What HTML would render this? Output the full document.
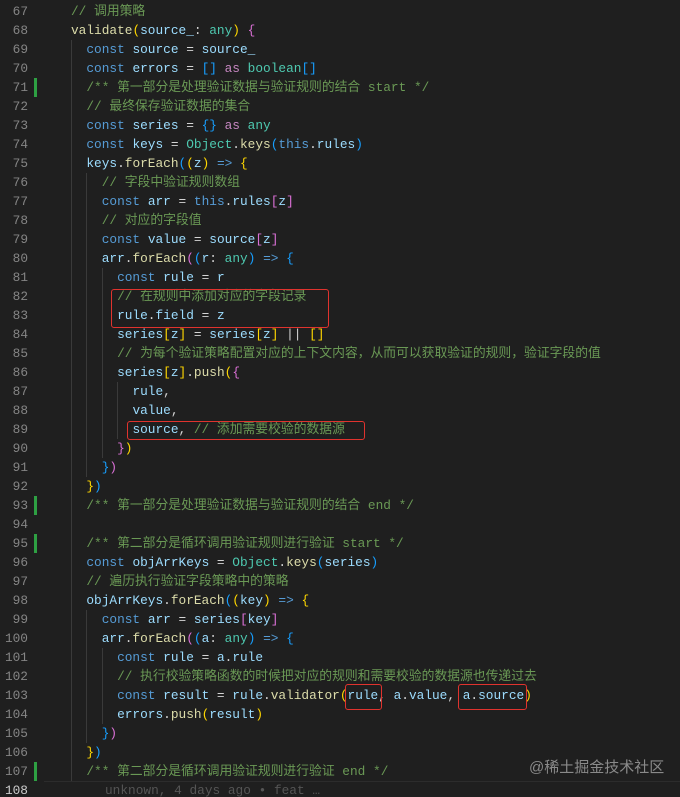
<!DOCTYPE html>
<html><head><meta charset="utf-8"><style>
html,body{margin:0;padding:0;background:#1f1f1f;width:680px;height:797px;overflow:hidden}
body{position:relative;font-family:"Liberation Mono","Noto Sans CJK SC",monospace;font-size:12.8px;color:#d4d4d4}
.l{position:absolute;left:0;height:19px;line-height:19px;white-space:pre;width:680px}
.n{position:absolute;left:0;width:28px;text-align:right;color:#858585}
.c{position:absolute;left:71px}
.g{display:inline-block;width:15.36px;height:19px;vertical-align:top;box-shadow:inset 1px 0 0 #3a3a3a}
.cm{color:#6a9955}.k{color:#569cd6}.v{color:#9cdcfe}.f{color:#dcdcaa}.t{color:#4ec9b0}.p{color:#c586c0}
.b1{color:#ffd700}.b2{color:#da70d6}.b3{color:#179fff}.o{color:#d4d4d4}
.gb{position:absolute;left:34px;width:3px;height:19px;background:#2ea043}
.rb{position:absolute;border:1px solid #e0332e;border-radius:3px}
</style></head><body>
<div class="l" style="top:2px"><span class="n">67</span><span class="c"><span class="cm">// 调用策略</span></span></div>
<div class="l" style="top:21px"><span class="n">68</span><span class="c"><span class="f">validate</span><span class="b1">(</span><span class="v">source_</span>: <span class="t">any</span><span class="b1">)</span> <span class="b2">{</span></span></div>
<div class="l" style="top:40px"><span class="n">69</span><span class="c"><span class="g">  </span><span class="k">const</span> <span class="v">source</span> = <span class="v">source_</span></span></div>
<div class="l" style="top:59px"><span class="n">70</span><span class="c"><span class="g">  </span><span class="k">const</span> <span class="v">errors</span> = <span class="b3">[]</span> <span class="p">as</span> <span class="t">boolean</span><span class="b3">[]</span></span></div>
<div class="gb" style="top:78px"></div>
<div class="l" style="top:78px"><span class="n">71</span><span class="c"><span class="g">  </span><span class="cm">/** 第一部分是处理验证数据与验证规则的结合 start */</span></span></div>
<div class="l" style="top:97px"><span class="n">72</span><span class="c"><span class="g">  </span><span class="cm">// 最终保存验证数据的集合</span></span></div>
<div class="l" style="top:116px"><span class="n">73</span><span class="c"><span class="g">  </span><span class="k">const</span> <span class="v">series</span> = <span class="b3">{}</span> <span class="p">as</span> <span class="t">any</span></span></div>
<div class="l" style="top:135px"><span class="n">74</span><span class="c"><span class="g">  </span><span class="k">const</span> <span class="v">keys</span> = <span class="t">Object</span>.<span class="f">keys</span><span class="b3">(</span><span class="k">this</span>.<span class="v">rules</span><span class="b3">)</span></span></div>
<div class="l" style="top:154px"><span class="n">75</span><span class="c"><span class="g">  </span><span class="v">keys</span>.<span class="f">forEach</span><span class="b3">(</span><span class="b1">(</span><span class="v">z</span><span class="b1">)</span> <span class="k">=&gt;</span> <span class="b1">{</span></span></div>
<div class="l" style="top:173px"><span class="n">76</span><span class="c"><span class="g">  </span><span class="g">  </span><span class="cm">// 字段中验证规则数组</span></span></div>
<div class="l" style="top:192px"><span class="n">77</span><span class="c"><span class="g">  </span><span class="g">  </span><span class="k">const</span> <span class="v">arr</span> = <span class="k">this</span>.<span class="v">rules</span><span class="b2">[</span><span class="v">z</span><span class="b2">]</span></span></div>
<div class="l" style="top:211px"><span class="n">78</span><span class="c"><span class="g">  </span><span class="g">  </span><span class="cm">// 对应的字段值</span></span></div>
<div class="l" style="top:230px"><span class="n">79</span><span class="c"><span class="g">  </span><span class="g">  </span><span class="k">const</span> <span class="v">value</span> = <span class="v">source</span><span class="b2">[</span><span class="v">z</span><span class="b2">]</span></span></div>
<div class="l" style="top:249px"><span class="n">80</span><span class="c"><span class="g">  </span><span class="g">  </span><span class="v">arr</span>.<span class="f">forEach</span><span class="b2">(</span><span class="b3">(</span><span class="v">r</span>: <span class="t">any</span><span class="b3">)</span> <span class="k">=&gt;</span> <span class="b3">{</span></span></div>
<div class="l" style="top:268px"><span class="n">81</span><span class="c"><span class="g">  </span><span class="g">  </span><span class="g">  </span><span class="k">const</span> <span class="v">rule</span> = <span class="v">r</span></span></div>
<div class="l" style="top:287px"><span class="n">82</span><span class="c"><span class="g">  </span><span class="g">  </span><span class="g">  </span><span class="cm">// 在规则中添加对应的字段记录</span></span></div>
<div class="l" style="top:306px"><span class="n">83</span><span class="c"><span class="g">  </span><span class="g">  </span><span class="g">  </span><span class="v">rule</span>.<span class="v">field</span> = <span class="v">z</span></span></div>
<div class="l" style="top:325px"><span class="n">84</span><span class="c"><span class="g">  </span><span class="g">  </span><span class="g">  </span><span class="v">series</span><span class="b1">[</span><span class="v">z</span><span class="b1">]</span> = <span class="v">series</span><span class="b1">[</span><span class="v">z</span><span class="b1">]</span> || <span class="b1">[]</span></span></div>
<div class="l" style="top:344px"><span class="n">85</span><span class="c"><span class="g">  </span><span class="g">  </span><span class="g">  </span><span class="cm">// 为每个验证策略配置对应的上下文内容，从而可以获取验证的规则，验证字段的值</span></span></div>
<div class="l" style="top:363px"><span class="n">86</span><span class="c"><span class="g">  </span><span class="g">  </span><span class="g">  </span><span class="v">series</span><span class="b1">[</span><span class="v">z</span><span class="b1">]</span>.<span class="f">push</span><span class="b1">(</span><span class="b2">{</span></span></div>
<div class="l" style="top:382px"><span class="n">87</span><span class="c"><span class="g">  </span><span class="g">  </span><span class="g">  </span><span class="g">  </span><span class="v">rule</span>,</span></div>
<div class="l" style="top:401px"><span class="n">88</span><span class="c"><span class="g">  </span><span class="g">  </span><span class="g">  </span><span class="g">  </span><span class="v">value</span>,</span></div>
<div class="l" style="top:420px"><span class="n">89</span><span class="c"><span class="g">  </span><span class="g">  </span><span class="g">  </span><span class="g">  </span><span class="v">source</span>, <span class="cm">// 添加需要校验的数据源</span></span></div>
<div class="l" style="top:439px"><span class="n">90</span><span class="c"><span class="g">  </span><span class="g">  </span><span class="g">  </span><span class="b2">}</span><span class="b1">)</span></span></div>
<div class="l" style="top:458px"><span class="n">91</span><span class="c"><span class="g">  </span><span class="g">  </span><span class="b3">}</span><span class="b2">)</span></span></div>
<div class="l" style="top:477px"><span class="n">92</span><span class="c"><span class="g">  </span><span class="b1">}</span><span class="b3">)</span></span></div>
<div class="gb" style="top:496px"></div>
<div class="l" style="top:496px"><span class="n">93</span><span class="c"><span class="g">  </span><span class="cm">/** 第一部分是处理验证数据与验证规则的结合 end */</span></span></div>
<div class="l" style="top:515px"><span class="n">94</span><span class="c"><span class="g">  </span></span></div>
<div class="gb" style="top:534px"></div>
<div class="l" style="top:534px"><span class="n">95</span><span class="c"><span class="g">  </span><span class="cm">/** 第二部分是循环调用验证规则进行验证 start */</span></span></div>
<div class="l" style="top:553px"><span class="n">96</span><span class="c"><span class="g">  </span><span class="k">const</span> <span class="v">objArrKeys</span> = <span class="t">Object</span>.<span class="f">keys</span><span class="b3">(</span><span class="v">series</span><span class="b3">)</span></span></div>
<div class="l" style="top:572px"><span class="n">97</span><span class="c"><span class="g">  </span><span class="cm">// 遍历执行验证字段策略中的策略</span></span></div>
<div class="l" style="top:591px"><span class="n">98</span><span class="c"><span class="g">  </span><span class="v">objArrKeys</span>.<span class="f">forEach</span><span class="b3">(</span><span class="b1">(</span><span class="v">key</span><span class="b1">)</span> <span class="k">=&gt;</span> <span class="b1">{</span></span></div>
<div class="l" style="top:610px"><span class="n">99</span><span class="c"><span class="g">  </span><span class="g">  </span><span class="k">const</span> <span class="v">arr</span> = <span class="v">series</span><span class="b2">[</span><span class="v">key</span><span class="b2">]</span></span></div>
<div class="l" style="top:629px"><span class="n">100</span><span class="c"><span class="g">  </span><span class="g">  </span><span class="v">arr</span>.<span class="f">forEach</span><span class="b2">(</span><span class="b3">(</span><span class="v">a</span>: <span class="t">any</span><span class="b3">)</span> <span class="k">=&gt;</span> <span class="b3">{</span></span></div>
<div class="l" style="top:648px"><span class="n">101</span><span class="c"><span class="g">  </span><span class="g">  </span><span class="g">  </span><span class="k">const</span> <span class="v">rule</span> = <span class="v">a</span>.<span class="v">rule</span></span></div>
<div class="l" style="top:667px"><span class="n">102</span><span class="c"><span class="g">  </span><span class="g">  </span><span class="g">  </span><span class="cm">// 执行校验策略函数的时候把对应的规则和需要校验的数据源也传递过去</span></span></div>
<div class="l" style="top:686px"><span class="n">103</span><span class="c"><span class="g">  </span><span class="g">  </span><span class="g">  </span><span class="k">const</span> <span class="v">result</span> = <span class="v">rule</span>.<span class="f">validator</span><span class="b1">(</span><span class="v">rule</span>, <span class="v">a</span>.<span class="v">value</span>, <span class="v">a</span>.<span class="v">source</span><span class="b1">)</span></span></div>
<div class="l" style="top:705px"><span class="n">104</span><span class="c"><span class="g">  </span><span class="g">  </span><span class="g">  </span><span class="v">errors</span>.<span class="f">push</span><span class="b1">(</span><span class="v">result</span><span class="b1">)</span></span></div>
<div class="l" style="top:724px"><span class="n">105</span><span class="c"><span class="g">  </span><span class="g">  </span><span class="b3">}</span><span class="b2">)</span></span></div>
<div class="l" style="top:743px"><span class="n">106</span><span class="c"><span class="g">  </span><span class="b1">}</span><span class="b3">)</span></span></div>
<div class="gb" style="top:762px"></div>
<div class="l" style="top:762px"><span class="n">107</span><span class="c"><span class="g">  </span><span class="cm">/** 第二部分是循环调用验证规则进行验证 end */</span></span></div>
<div style="position:absolute;left:44px;top:781px;width:636px;height:17px;border-top:1px solid #2c2c2c"></div>
<div class="l" style="top:781px"><span class="n" style="color:#cccccc">108</span><span class="c" style="left:105px;color:#555">unknown, 4 days ago • feat …</span></div>
<div style="position:absolute;left:529px;top:756px;color:#8a8a8a;font-family:'Liberation Sans','Noto Sans CJK SC',sans-serif;font-size:15px">@稀土掘金技术社区</div>
<div class="rb" style="left:111px;top:289px;width:216px;height:37px"></div>
<div class="rb" style="left:127px;top:421px;width:236px;height:17px"></div>
<div class="rb" style="left:345px;top:684px;width:35px;height:24px"></div>
<div class="rb" style="left:458px;top:684px;width:67px;height:24px"></div>
</body></html>
